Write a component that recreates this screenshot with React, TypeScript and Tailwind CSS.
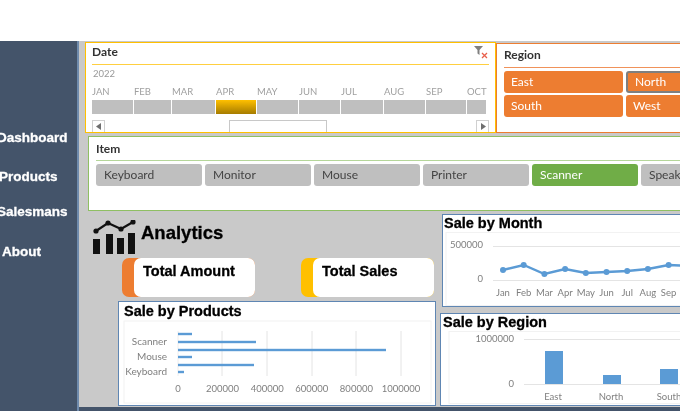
const months = [
  { n: "JAN", w: "w-[42px]" },
  { n: "FEB", w: "w-[38px]" },
  { n: "MAR", w: "w-[44px]" },
  { n: "APR", w: "w-[41px]", on: true },
  { n: "MAY", w: "w-[42px]" },
  { n: "JUN", w: "w-[42px]" },
  { n: "JUL", w: "w-[43px]" },
  { n: "AUG", w: "w-[42px]" },
  { n: "SEP", w: "w-[41px]" },
  { n: "OCT", w: "w-[20px]" },
];

function DatePanel() {
  return (
    <div className="w-[411px] h-[91px] shrink-0 bg-white border border-[#ffc000] px-[6px] flex flex-col">
      <div className="h-[22px] flex items-center justify-between border-b border-[#ffcf40] shrink-0">
        <span className="text-[12px] font-bold text-[#333] mb-[3px]">Date</span>
        <svg width="14" height="14" viewBox="0 0 14 14" className="mr-[1px] mb-[4px]">
          <path d="M0 1h9L5.5 5v5L3.5 8.5V5z" fill="#7f7f7f" />
          <path d="M8 8l5 5M13 8l-5 5" stroke="#e8604c" strokeWidth="1.3" />
        </svg>
      </div>
      <div className="text-[9.5px] text-[#999] h-[14px] mt-[2px] ml-[1px] leading-[14px]">2022</div>
      <div className="flex mt-[4px] h-[15px] items-center">
        {months.map((m) => (
          <span key={m.n} className={`${m.w} shrink-0 text-[9.5px] text-[#a0a0a0] overflow-hidden whitespace-nowrap`}>{m.n}</span>
        ))}
      </div>
      <div className="flex h-[15px] mt-[1px]">
        {months.map((m) => (
          <div key={m.n} className={`${m.w} shrink-0 border-r border-white ${m.on ? "bg-gradient-to-b from-[#ffc000] to-[#a67c00]" : "bg-[#bfbfbf]"}`} />
        ))}
      </div>
      <div className="flex items-start justify-between h-[13px] mt-[6px] overflow-hidden">
        <div className="w-[13px] h-[13px] border border-[#d0d0d0] flex items-center justify-center">
          <svg width="6" height="7" viewBox="0 0 6 7"><path d="M5 0v7L0 3.5z" fill="#6f6f6f" /></svg>
        </div>
        <div className="w-[98px] h-[13px] border border-[#c8c8c8] ml-[124px] mr-[149px]" />
        <div className="w-[13px] h-[13px] border border-[#d0d0d0] flex items-center justify-center">
          <svg width="6" height="7" viewBox="0 0 6 7"><path d="M1 0v7l5-3.5z" fill="#6f6f6f" /></svg>
        </div>
      </div>
    </div>
  );
}

function RegionBtn({ t, sel }: { t: string; sel?: boolean }) {
  return (
    <div className={`w-[119px] h-[22px] shrink-0 rounded-[3px] bg-[#ed7d31] text-white text-[12px] flex items-center pl-[7px] ${sel ? "border-2 border-[#7f7f7f]" : ""}`}>{t}</div>
  );
}

function RegionPanel() {
  return (
    <div className="w-[200px] h-[90px] shrink-0 mt-[1px] bg-white border border-[#ed7d31] pl-[7px] flex flex-col">
      <div className="h-[24px] border-b border-[#f0925a] flex items-center shrink-0">
        <span className="text-[12px] font-bold text-[#333] mb-[1px]">Region</span>
      </div>
      <div className="flex gap-[3px] mt-[3px]"><RegionBtn t="East" /><RegionBtn t="North" sel /></div>
      <div className="flex gap-[3px] mt-[2px]"><RegionBtn t="South" /><RegionBtn t="West" /></div>
    </div>
  );
}

function ItemPanel() {
  const items = ["Keyboard", "Monitor", "Mouse", "Printer", "Scanner", "Speaker"];
  return (
    <div className="w-[620px] h-[75px] shrink-0 ml-[3px] mt-[3px] bg-white border border-[#8fbf63] px-[7px] flex flex-col">
      <div className="h-[24px] border-b border-[#b5d69a] flex items-center shrink-0">
        <span className="text-[12px] font-bold text-[#333]">Item</span>
      </div>
      <div className="flex gap-[3px] mt-[3px]">
        {items.map((t) => (
          <div key={t} className={`w-[106px] h-[22px] shrink-0 rounded-[3px] text-[12px] flex items-center pl-[8px] ${t === "Scanner" ? "bg-[#70ad47] text-white" : "bg-[#bfbfbf] text-[#444]"}`}>{t}</div>
        ))}
      </div>
    </div>
  );
}

function Card({ t, c, ml }: { t: string; c: string; ml: string }) {
  return (
    <div className={`w-[133px] h-[39px] shrink-0 ${ml} rounded-[7px] ${c}`}>
      <div className="ml-[12px] h-full bg-white rounded-[7px] pl-[9px] pt-[5px] text-[14.5px] leading-[16px] font-bold text-black font-['Liberation_Sans',sans-serif] [-webkit-text-stroke:0.3px_#000] whitespace-nowrap">{t}</div>
    </div>
  );
}

const tx = "#7f7f7f";

function ProductsChart() {
  const bars = [
    [13, 14],
    [21, 78],
    [29, 208],
    [36, 14],
    [44, 76],
    [51, 6],
  ];
  return (
    <svg width="311" height="84" viewBox="0 0 311 84">
      <rect x="2" y="1" width="307" height="82" fill="#fff" stroke="#f2f2f2" />
      {[100, 145, 190, 234, 279].map((x) => <path key={x} d={`M${x} 11V56`} stroke="#e4e4e4" />)}
      <path d="M56 11V56" stroke="#eeeeee" />
      {bars.map(([y, w]) => <rect key={y} x="56" y={y - 0.2} width={w} height="2.4" fill="#5b9bd5" />)}
      {[["Scanner", 25], ["Mouse", 40], ["Keyboard", 55]].map(([t, y]) => (
        <text key={t} x="45" y={y} textAnchor="end" fontSize="10" fill={tx} fontFamily="Lato">{t}</text>
      ))}
      {["0", "200000", "400000", "600000", "800000", "1000000"].map((t, i) => (
        <text key={t} x={56 + i * 44.6} y="72" textAnchor="middle" fontSize="9.5" fill={tx} fontFamily="Lato">{t}</text>
      ))}
    </svg>
  );
}

function MonthChart() {
  const labels = ["Jan", "Feb", "Mar", "Apr", "May", "Jun", "Jul", "Aug", "Sep", "Oct"];
  const ys = [38, 33, 42, 37, 41, 40, 39, 37, 33, 34];
  const xs = labels.map((_, i) => 59 + i * 20.7);
  return (
    <svg width="250" height="74" viewBox="0 0 250 74">
      <rect x="2" y="0.5" width="260" height="73" fill="#fff" stroke="#f2f2f2" />
      <path d="M49 14.5H250M49 48.5H250" stroke="#e4e4e4" />
      <polyline points={xs.map((x, i) => `${x},${ys[i]}`).join(" ")} fill="none" stroke="#5b9bd5" strokeWidth="2.4" />
      {xs.map((x, i) => <circle key={x} cx={x} cy={ys[i]} r="3" fill="#5b9bd5" />)}
      <text x="39" y="16" textAnchor="end" fontSize="9.5" fill={tx} fontFamily="Lato">500000</text>
      <text x="39" y="50" textAnchor="end" fontSize="9.5" fill={tx} fontFamily="Lato">0</text>
      {labels.map((t, i) => (
        <text key={t} x={xs[i]} y="64" textAnchor="middle" fontSize="9.5" fill={tx} fontFamily="Lato">{t}</text>
      ))}
    </svg>
  );
}

function RegionChart() {
  return (
    <svg width="250" height="73" viewBox="0 0 250 73">
      <rect x="6" y="0.5" width="260" height="72" fill="#fff" stroke="#f2f2f2" />
      <path d="M81 8.5H250M81 53.5H250" stroke="#e4e4e4" />
      <rect x="102" y="20" width="18" height="33" fill="#5b9bd5" />
      <rect x="160" y="44" width="18" height="9" fill="#5b9bd5" />
      <rect x="217" y="38" width="18" height="15" fill="#5b9bd5" />
      <text x="71" y="11" textAnchor="end" fontSize="9.5" fill={tx} fontFamily="Lato">1000000</text>
      <text x="71" y="56" textAnchor="end" fontSize="9.5" fill={tx} fontFamily="Lato">0</text>
      {([["East", 110], ["North", 168], ["South", 226]] as const).map(([t, x]) => (
        <text key={t} x={x} y="69" textAnchor="middle" fontSize="9.5" fill={tx} fontFamily="Lato">{t}</text>
      ))}
    </svg>
  );
}

function Title({ t }: { t: string }) {
  return <div className="h-[17px] shrink-0 text-[14.5px] leading-[17px] font-bold text-black font-['Liberation_Sans',sans-serif] [-webkit-text-stroke:0.3px_#000] whitespace-nowrap">{t}</div>;
}

export default function App() {
  return (
    <div className="w-[680px] h-[411px] overflow-hidden bg-white flex flex-col font-['Lato','Noto_Sans',sans-serif] blur-[0.35px]">
      <div className="h-[41px] shrink-0" />
      <div className="flex-1 flex min-h-0">
        <div className="w-[79px] shrink-0 bg-[#44546a] border-r-2 border-[#6f8bad] flex flex-col text-white font-bold text-[13.5px] leading-[20px] font-['Liberation_Sans',sans-serif] [-webkit-text-stroke:0.3px_#fff] whitespace-nowrap">
          <div className="ml-[-3px] mt-[87px]">Dashboard</div>
          <div className="ml-[-1px] mt-[19px]">Products</div>
          <div className="ml-[-3px] mt-[15px]">Salesmans</div>
          <div className="ml-[2px] mt-[20px]">About</div>
        </div>
        <div className="flex-1 min-w-0 flex flex-col bg-[#c9c9c9] overflow-hidden">
          <div className="flex-1 min-h-0 pl-[6px] pt-[1px]">
            <div className="flex"><DatePanel /><RegionPanel /></div>
            <ItemPanel />
            <div className="flex mt-[3px]">
              <div className="w-[349px] shrink-0 flex flex-col">
                <div className="flex items-center h-[40px] ml-[8px] mt-[4px] gap-[4px]">
                  <svg width="44" height="36" viewBox="0 0 44 36">
                    <rect x="0" y="19" width="7" height="15" fill="#111" />
                    <rect x="13" y="14" width="7" height="20" fill="#111" />
                    <rect x="24" y="18" width="7" height="16" fill="#111" />
                    <rect x="35" y="13" width="7" height="21" fill="#111" />
                    <polyline points="3,11 15,3 28,9 40,2" fill="none" stroke="#111" strokeWidth="2.2" />
                    {[[3, 11], [15, 3], [28, 9], [40, 2]].map(([x, y]) => <circle key={x} cx={x} cy={y} r="2.6" fill="#111" />)}
                  </svg>
                  <span className="text-[18.5px] font-bold text-black font-['Liberation_Sans',sans-serif] [-webkit-text-stroke:0.3px_#000] mb-[10px]">Analytics</span>
                </div>
                <div className="flex">
                  <Card t="Total Amount" c="bg-[#ed7d31]" ml="ml-[37px]" />
                  <Card t="Total Sales" c="bg-[#ffc000]" ml="ml-[46px]" />
                </div>
                <div className="w-[318px] h-[105px] mt-[4px] ml-[33px] bg-white border border-[#5f86b3] pl-[5px] pt-[1px] flex flex-col">
                  <Title t="Sale by Products" />
                  <div className="ml-[-2px]"><ProductsChart /></div>
                </div>
              </div>
              <div className="flex-1 flex flex-col">
                <div className="h-[93px] ml-[8px] bg-white border border-[#5f86b3] pl-[1px] overflow-hidden shrink-0">
                  <Title t="Sale by Month" />
                  <MonthChart />
                </div>
                <div className="h-[93px] ml-[6px] mt-[6px] bg-white border border-[#5f86b3] pl-[2px] overflow-hidden shrink-0">
                  <Title t="Sale by Region" />
                  <RegionChart />
                </div>
              </div>
            </div>
          </div>
          <div className="h-[4px] shrink-0 bg-[#44546a]" />
        </div>
      </div>
    </div>
  );
}
